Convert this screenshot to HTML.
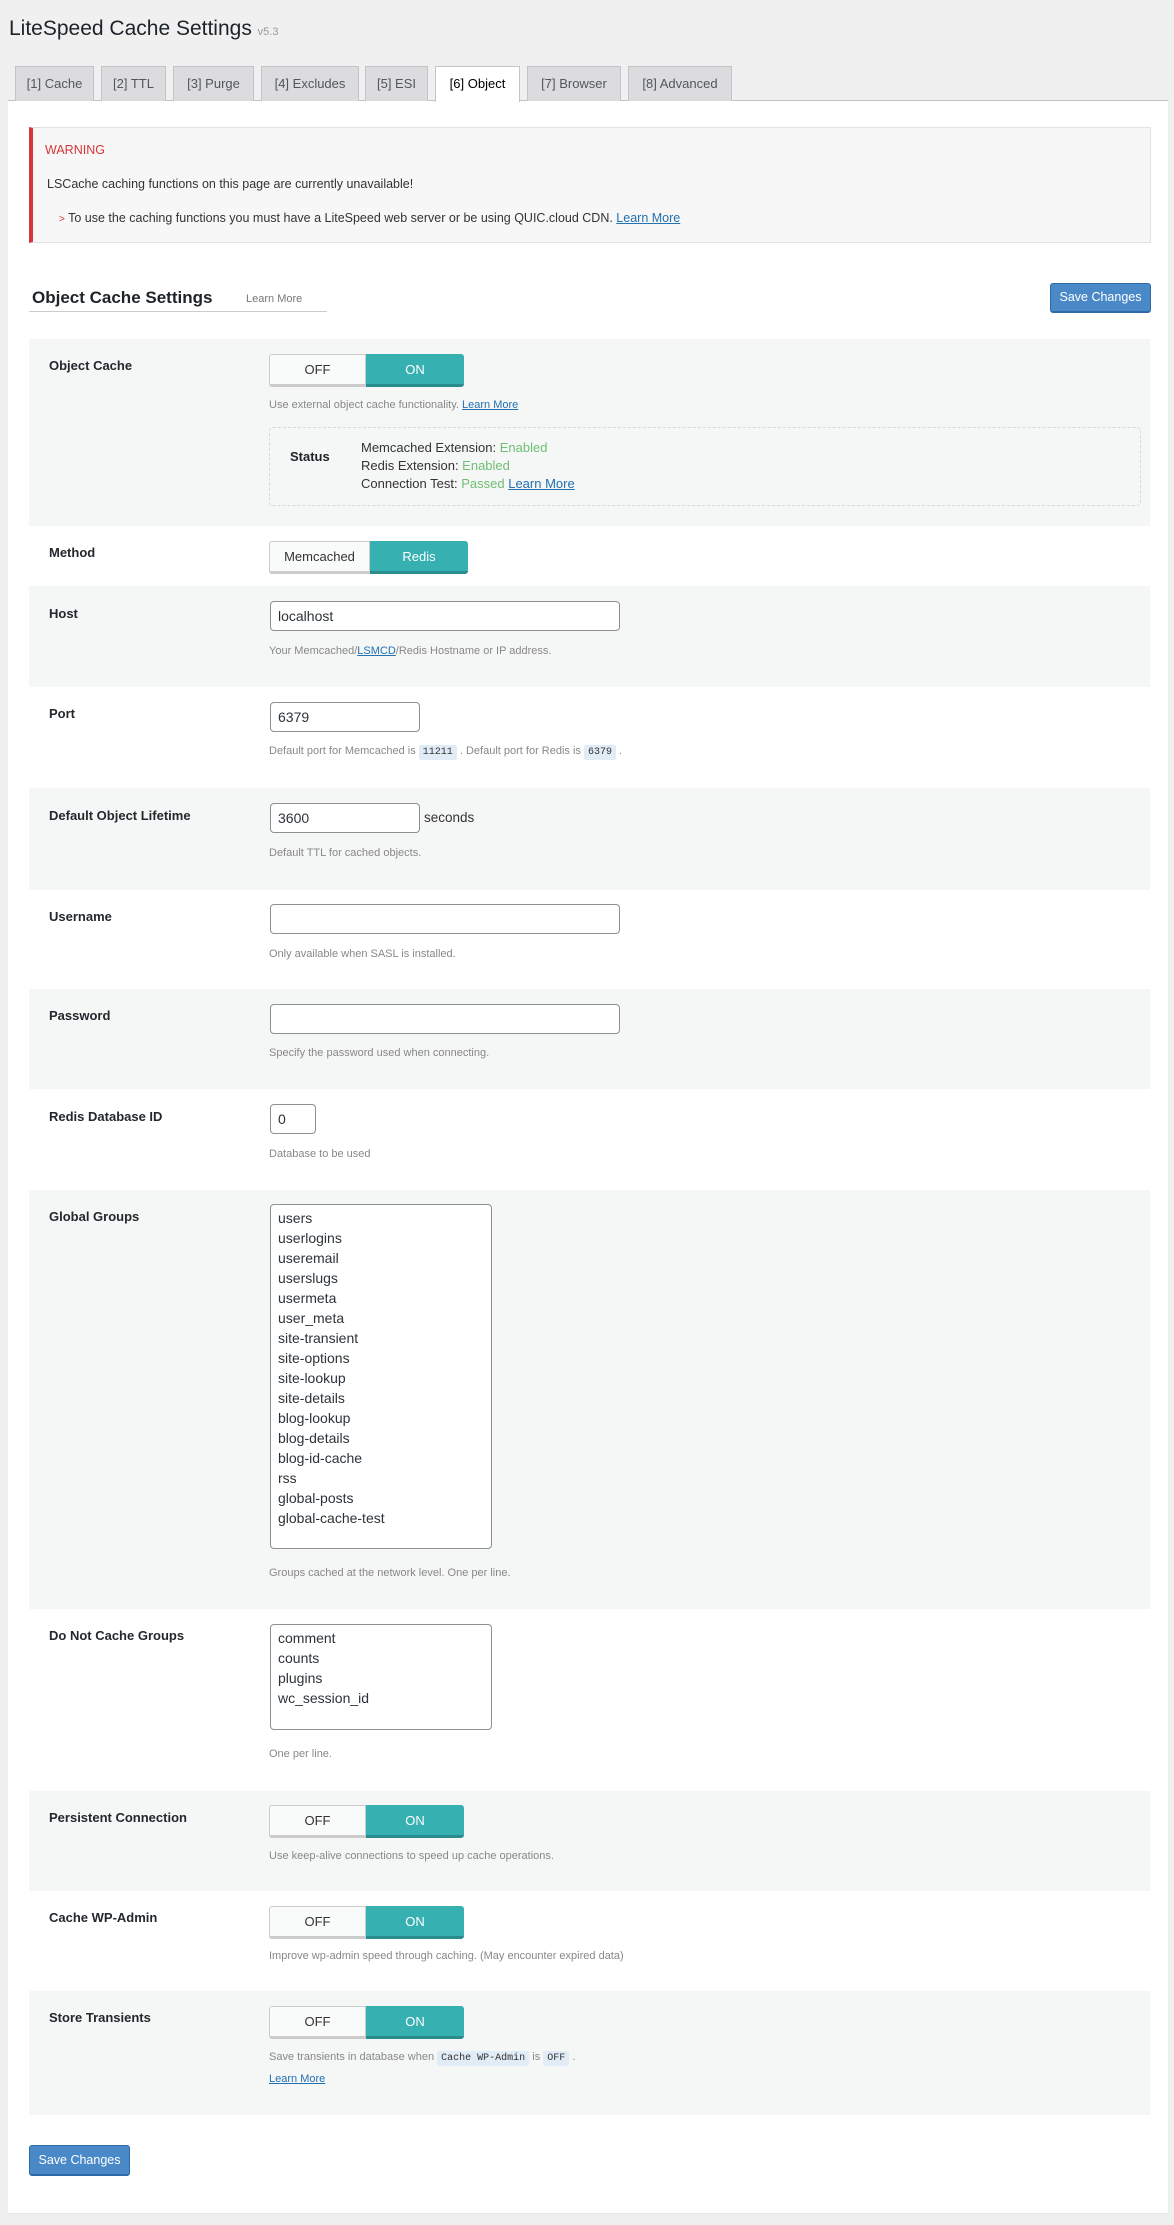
<!DOCTYPE html>
<html><head><meta charset="utf-8">
<style>
*{box-sizing:border-box;margin:0;padding:0}
body{width:1174px;height:2225px;background:#f0f0f1;font-family:"Liberation Sans",sans-serif;color:#1d2327;position:relative;overflow:hidden}
.a{position:absolute}
.title{left:9px;top:17px;font-size:21px;color:#1d2327}
.title small{font-size:11px;color:#999}
.tab{top:66px;height:35px;border:1px solid #c3c4c7;border-bottom:none;background:#dcdcde;font-size:13px;color:#50575e;text-align:center;line-height:33px}
.tab.on{background:#fff;color:#000;height:36px}
.panel{left:8px;top:100px;width:1160px;height:2113px;background:#fff;border-top:1px solid #c3c4c7;box-shadow:0 1px 1px rgba(0,0,0,.05)}
.warn{left:29px;top:127px;width:1122px;height:116px;background:#f7f7f7;border:1px solid #e2e2e2;border-left:4px solid #d63638}
.row{left:29px;width:1121px;background:#f5f6f6}
.lab{left:49px;font-size:13px;font-weight:bold;color:#23282d}
.desc{left:269px;font-size:11px;color:#888}
.desc a,.lnk{color:#2271b1;text-decoration:underline}
.tg{left:269px;height:33px;display:flex;font-size:13px}
.tg .off{width:97px;background:#f9fafa;border:1px solid #ccc;border-bottom:3px solid #ccc;border-radius:3px 0 0 3px;text-align:center;line-height:29px;color:#333}
.tg .onn{width:98px;background:#36b0b0;border-bottom:3px solid #2a8d8d;border-radius:0 3px 3px 0;text-align:center;line-height:32px;color:#fff}
.inp{left:270px;height:30px;border:1px solid #8c8f94;border-radius:4px;background:#fff;font-size:14px;padding-left:7px;line-height:28px;color:#2c3338}
code{font-family:"Liberation Mono",monospace;font-size:10px;background:#e1ecf7;color:#333;padding:2px 4px;border-radius:2px}
.btn{background:#4a89c8;border:1px solid #2e6aa6;border-bottom-width:2px;color:#fff;font-size:12.5px;text-align:center;border-radius:3px}
.ta{left:270px;width:222px;border:1px solid #8c8f94;border-radius:4px;background:#fff;font-size:14px;line-height:20px;padding:3px 7px;color:#2c3338;white-space:pre}
</style></head><body>
<div class="a title">LiteSpeed Cache Settings <small>v5.3</small></div>
<div class="a panel"></div>
<div class="a tab" style="left:15px;width:79px">[1] Cache</div>
<div class="a tab" style="left:101px;width:65px">[2] TTL</div>
<div class="a tab" style="left:173px;width:81px">[3] Purge</div>
<div class="a tab" style="left:261px;width:98px">[4] Excludes</div>
<div class="a tab" style="left:365px;width:63px">[5] ESI</div>
<div class="a tab on" style="left:435px;width:85px">[6] Object</div>
<div class="a tab" style="left:527px;width:94px">[7] Browser</div>
<div class="a tab" style="left:628px;width:104px">[8] Advanced</div>

<div class="a warn"></div>
<div class="a" style="left:45px;top:143px;font-size:12.5px;color:#d63638">WARNING</div>
<div class="a" style="left:47px;top:177px;font-size:12.5px;color:#333">LSCache caching functions on this page are currently unavailable!</div>
<div class="a" style="left:59px;top:211px;font-size:12.5px;color:#333"><span style="color:#d63638;font-size:10px">&gt;</span> To use the caching functions you must have a LiteSpeed web server or be using QUIC.cloud CDN. <span class="lnk">Learn More</span></div>

<div class="a" style="left:32px;top:288px;font-size:17px;font-weight:600;color:#1d2327">Object Cache Settings</div>
<div class="a" style="left:246px;top:293px;font-size:11px;color:#777">Learn More</div>
<div class="a" style="left:29px;top:311px;width:298px;height:1px;background:#ccc"></div>
<div class="a btn" style="left:1050px;top:283px;width:101px;height:30px;line-height:27px">Save Changes</div>

<div class="a row" style="top:339px;height:187px"></div>
<div class="a lab" style="top:358px">Object Cache</div>
<div class="a tg" style="top:354px"><div class="off">OFF</div><div class="onn">ON</div></div>
<div class="a desc" style="top:399px">Use external object cache functionality. <a>Learn More</a></div>
<div class="a" style="left:269px;top:427px;width:872px;height:79px;border:1px dashed #d8d8d8;border-radius:4px"></div>
<div class="a" style="left:290px;top:449px;font-size:13px;font-weight:bold">Status</div>
<div class="a" style="left:361px;top:439px;font-size:13px;line-height:18px;color:#333">Memcached Extension: <span style="color:#6fbf73">Enabled</span><br>Redis Extension: <span style="color:#6fbf73">Enabled</span><br>Connection Test: <span style="color:#6fbf73">Passed</span> <span class="lnk">Learn More</span></div>

<div class="a lab" style="top:545px">Method</div>
<div class="a tg" style="top:541px"><div class="off" style="width:101px">Memcached</div><div class="onn" style="width:98px">Redis</div></div>

<div class="a row" style="top:586px;height:101px"></div>
<div class="a lab" style="top:606px">Host</div>
<div class="a inp" style="top:601px;width:350px">localhost</div>
<div class="a desc" style="top:645px">Your Memcached/<a>LSMCD</a>/Redis Hostname or IP address.</div>

<div class="a lab" style="top:706px">Port</div>
<div class="a inp" style="top:702px;width:150px">6379</div>
<div class="a desc" style="top:745px">Default port for Memcached is <code>11211</code> . Default port for Redis is <code>6379</code> .</div>

<div class="a row" style="top:788px;height:102px"></div>
<div class="a lab" style="top:808px">Default Object Lifetime</div>
<div class="a inp" style="top:803px;width:150px">3600</div>
<div class="a" style="left:424px;top:810px;font-size:13.5px;color:#333">seconds</div>
<div class="a desc" style="top:847px">Default TTL for cached objects.</div>

<div class="a lab" style="top:909px">Username</div>
<div class="a inp" style="top:904px;width:350px"></div>
<div class="a desc" style="top:948px">Only available when SASL is installed.</div>

<div class="a row" style="top:989px;height:100px"></div>
<div class="a lab" style="top:1008px">Password</div>
<div class="a inp" style="top:1004px;width:350px"></div>
<div class="a desc" style="top:1047px">Specify the password used when connecting.</div>

<div class="a lab" style="top:1109px">Redis Database ID</div>
<div class="a inp" style="top:1104px;width:46px">0</div>
<div class="a desc" style="top:1148px">Database to be used</div>

<div class="a row" style="top:1190px;height:419px"></div>
<div class="a lab" style="top:1209px">Global Groups</div>
<div class="a ta" style="top:1204px;height:345px">users
userlogins
useremail
userslugs
usermeta
user_meta
site-transient
site-options
site-lookup
site-details
blog-lookup
blog-details
blog-id-cache
rss
global-posts
global-cache-test</div>
<div class="a desc" style="top:1567px">Groups cached at the network level. One per line.</div>

<div class="a lab" style="top:1628px">Do Not Cache Groups</div>
<div class="a ta" style="top:1624px;height:106px">comment
counts
plugins
wc_session_id</div>
<div class="a desc" style="top:1748px">One per line.</div>

<div class="a row" style="top:1791px;height:100px"></div>
<div class="a lab" style="top:1810px">Persistent Connection</div>
<div class="a tg" style="top:1805px"><div class="off">OFF</div><div class="onn">ON</div></div>
<div class="a desc" style="top:1850px">Use keep-alive connections to speed up cache operations.</div>

<div class="a lab" style="top:1910px">Cache WP-Admin</div>
<div class="a tg" style="top:1906px"><div class="off">OFF</div><div class="onn">ON</div></div>
<div class="a desc" style="top:1950px">Improve wp-admin speed through caching. (May encounter expired data)</div>

<div class="a row" style="top:1991px;height:124px"></div>
<div class="a lab" style="top:2010px">Store Transients</div>
<div class="a tg" style="top:2006px"><div class="off">OFF</div><div class="onn">ON</div></div>
<div class="a desc" style="top:2051px">Save transients in database when <code>Cache WP-Admin</code> is <code>OFF</code> .</div>
<div class="a desc" style="top:2073px"><a>Learn More</a></div>

<div class="a btn" style="left:29px;top:2145px;width:101px;height:31px;line-height:28px">Save Changes</div>
</body></html>
